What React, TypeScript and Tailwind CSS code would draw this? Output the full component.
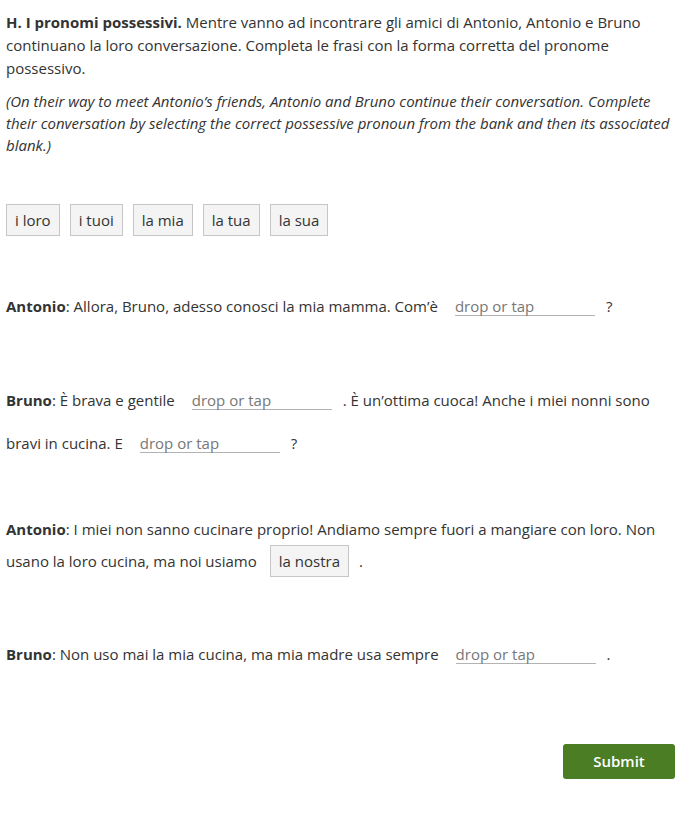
import { ReactNode } from "react";

const bank = ["i loro", "i tuoi", "la mia", "la tua", "la sua"];

function Blank() {
  return (
    <span className="my-[12px] ml-[17px] mr-[11px] inline-block w-[140px] border-b border-[#b3b3b3] align-baseline leading-[18px] text-[#777]">
      drop or tap
    </span>
  );
}

function Chip({ children, inline = false }: { children: ReactNode; inline?: boolean }) {
  return (
    <span
      className={`inline-block h-[32px] border border-[#c6c6c6] bg-[#f4f4f4] px-[8px] leading-[30px] text-[#333] ${
        inline ? "my-[4px] ml-[13px] mr-[10px]" : ""
      }`}
    >
      {children}
    </span>
  );
}

function Line({ name, children, className = "" }: { name: string; children: ReactNode; className?: string }) {
  return (
    <p className={`leading-[22.5px] ${className}`}>
      <b className="font-bold">{name}</b>: {children}
    </p>
  );
}

export default function App() {
  return (
    <div
      className="min-h-[832px] bg-white pl-[6px] pr-[18px] pt-[11px] text-[15px] text-[#333]"
      style={{ fontFamily: '"Open Sans", "Noto Sans", sans-serif' }}
    >
      <p className="leading-[23px]">
        <b className="font-bold">H. I pronomi possessivi.</b> Mentre vanno ad incontrare gli amici di Antonio, Antonio e
        Bruno continuano la loro conversazione. Completa le frasi con la forma corretta del pronome possessivo.
      </p>
      <p className="mt-[10px] italic leading-[22px]">
        (On their way to meet Antonio’s friends, Antonio and Bruno continue their conversation. Complete their
        conversation by selecting the correct possessive pronoun from the bank and then its associated blank.)
      </p>

      <div className="mt-[48px] flex gap-[10px]">
        {bank.map((w) => (
          <Chip key={w}>{w}</Chip>
        ))}
      </div>

      <Line name="Antonio" className="mt-[49px]">
        Allora, Bruno, adesso conosci la mia mamma. Com’è
        <Blank />?
      </Line>

      <Line name="Bruno" className="mt-[51px]">
        È brava e gentile
        <Blank />. È un’ottima cuoca! Anche i miei nonni sono bravi in cucina. E
        <Blank />?
      </Line>

      <Line name="Antonio" className="mt-[53px]">
        I miei non sanno cucinare proprio! Andiamo sempre fuori a mangiare con loro. Non usano la loro cucina, ma noi
        usiamo
        <Chip inline>la nostra</Chip>.
      </Line>

      <Line name="Bruno" className="mt-[52px]">
        Non uso mai la mia cucina, ma mia madre usa sempre
        <Blank />.
      </Line>

      <div className="mt-[68px] flex justify-end">
        <button className="h-[35px] w-[112px] rounded-[3px] bg-[#4b7d25] text-[15px] font-semibold text-white">
          Submit
        </button>
      </div>
    </div>
  );
}
